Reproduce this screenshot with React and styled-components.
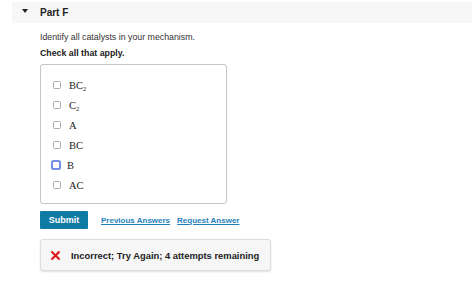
import React from "react"
import styled, { createGlobalStyle } from "styled-components"

const Global = createGlobalStyle`
  body {
    margin: 0;
    background: #fff;
    font-family: "Liberation Sans", Arial, sans-serif;
    color: #222;
  }
`

const Page = styled.div`
  width: 474px;
  height: 281px;
  padding: 2px 2px 0 12px;
  box-sizing: border-box;
`

const PartHeader = styled.div`
  display: flex;
  align-items: center;
  height: 21px;
  background: #f7f7f7;
  padding-left: 10px;
  font-size: 10px;
  font-weight: bold;
  color: #222;
`

const Caret = styled.span`
  width: 0;
  height: 0;
  border-left: 3.5px solid transparent;
  border-right: 3.5px solid transparent;
  border-top: 4px solid #222;
  margin-right: 12px;
  margin-top: -4px;
`

const Body = styled.div`
  padding: 8px 0 0 28px;
`

const Prompt = styled.p`
  margin: 0;
  font-size: 8.8px;
  line-height: 12px;
  color: #333;
`

const Instruction = styled.p`
  margin: 4px 0 0;
  font-size: 8.8px;
  line-height: 12px;
  font-weight: bold;
  color: #222;
`

const ChoiceBox = styled.div`
  width: 187px;
  height: 140px;
  box-sizing: border-box;
  margin-top: 5px;
  border: 1px solid #c4c4c4;
  border-radius: 3px;
  padding: 10px 0 0 12px;
  display: flex;
  flex-direction: column;
`

const Choice = styled.label`
  display: flex;
  align-items: center;
  height: 20px;
  font-family: "Liberation Serif", "Times New Roman", serif;
  font-size: 10.5px;
  color: #222;
`

const Sub = styled.sub`
  font-size: 6.5px;
  line-height: 0;
  vertical-align: -1.5px;
`

const Box = styled.span`
  width: 6px;
  height: 6px;
  border: 1px solid #adadad;
  border-radius: 1.5px;
  margin-right: 8px;
  ${({ $focus }) =>
    $focus &&
    `
    margin-left: -2px;
    margin-right: 6px;
    border: 2px solid #6f8fe6;
    border-radius: 2.5px;
  `}
`

const Actions = styled.div`
  display: flex;
  align-items: center;
  margin-top: 7px;
  gap: 13px;
`

const SubmitButton = styled.button`
  width: 48px;
  height: 18px;
  border: none;
  border-radius: 1px;
  background: #0f7aa3;
  color: #fff;
  font-family: "Liberation Sans", Arial, sans-serif;
  font-size: 9px;
  font-weight: bold;
  padding: 0;
`

const LinkRow = styled.div`
  display: flex;
  gap: 7px;
`

const TextLink = styled.a`
  font-size: 8px;
  font-weight: bold;
  color: #1f7fbb;
  text-decoration: underline;
`

const Feedback = styled.div`
  display: flex;
  align-items: center;
  width: 231px;
  height: 32px;
  box-sizing: border-box;
  margin-top: 10px;
  padding-left: 10px;
  background: #f6f6f6;
  border: 1px solid #dcdcdc;
  border-radius: 3px;
  box-shadow: 0 1px 2px rgba(0, 0, 0, 0.12);
  font-size: 9.4px;
  font-weight: bold;
  color: #222;
`

const Cross = () => (
  <svg width="9" height="9" viewBox="0 0 9 9" style={{ marginRight: 11 }}>
    <path d="M1.2 1.2 L7.8 7.8 M7.8 1.2 L1.2 7.8" stroke="#e0191b" strokeWidth="2.2" strokeLinecap="square" />
  </svg>
)

const choices = [
  { label: <>BC<Sub>2</Sub></> },
  { label: <>C<Sub>2</Sub></> },
  { label: "A" },
  { label: "BC" },
  { label: "B", focus: true },
  { label: "AC" },
]

export default function App() {
  return (
    <Page>
      <Global />
      <PartHeader>
        <Caret />
        Part F
      </PartHeader>
      <Body>
        <Prompt>Identify all catalysts in your mechanism.</Prompt>
        <Instruction>Check all that apply.</Instruction>
        <ChoiceBox>
          {choices.map((c, i) => (
            <Choice key={i}>
              <Box $focus={c.focus} />
              <span>{c.label}</span>
            </Choice>
          ))}
        </ChoiceBox>
        <Actions>
          <SubmitButton>Submit</SubmitButton>
          <LinkRow>
            <TextLink>Previous Answers</TextLink>
            <TextLink>Request Answer</TextLink>
          </LinkRow>
        </Actions>
        <Feedback>
          <Cross />
          Incorrect; Try Again; 4 attempts remaining
        </Feedback>
      </Body>
    </Page>
  )
}
